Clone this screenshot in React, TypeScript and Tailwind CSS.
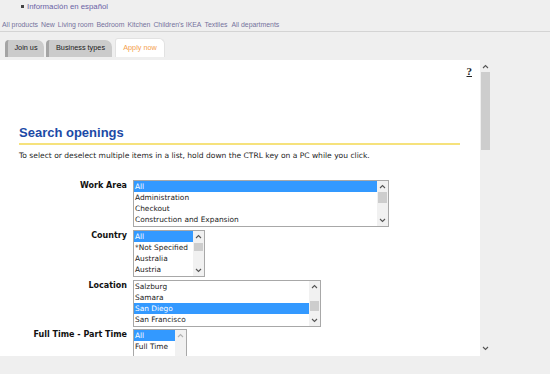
import React from "react";

const Up = () => (
  <svg width="7" height="5" viewBox="0 0 7 5" className="block">
    <path d="M1 4 L3.5 1.5 L6 4" fill="none" stroke="#555" strokeWidth="1.1" />
  </svg>
);
const Down = () => (
  <svg width="7" height="5" viewBox="0 0 7 5" className="block">
    <path d="M1 1 L3.5 3.5 L6 1" fill="none" stroke="#555" strokeWidth="1.1" />
  </svg>
);

type LBProps = {
  width: string;
  items: string[];
  selected: number;
  thumbTop: number;
  thumbH: number;
  upFaded?: boolean;
};

function ListBox({ width, items, selected, thumbTop, thumbH, upFaded }: LBProps) {
  return (
    <div className={`${width} h-[47px] border border-[#a8a8a8] bg-white flex overflow-hidden shrink-0`}>
      <div className="flex-1 flex flex-col min-w-0">
        {items.map((it, i) => (
          <div
            key={it}
            className={`h-[11.25px] leading-[11.25px] pl-[1px] text-[7.4px] whitespace-nowrap ${
              i === selected ? "bg-[#3399ff] text-white" : "text-[#222]"
            }`}
          >
            {it}
          </div>
        ))}
      </div>
      <div className="w-[11px] h-[45px] bg-[#f1f1f1] relative shrink-0">
        <div className={`absolute left-[2px] top-[3px] ${upFaded ? "opacity-40" : ""}`}>
          <Up />
        </div>
        <div
          className="absolute left-[1px] w-[9px] bg-[#cdcdcd]"
          style={{ top: thumbTop, height: thumbH }}
        />
        <div className="absolute left-[2px] bottom-[3px]">
          <Down />
        </div>
      </div>
    </div>
  );
}

function Row({ label, children, mt }: { label: string; children: React.ReactNode; mt: string }) {
  return (
    <div className={`flex shrink-0 ${mt}`}>
      <div className="w-[127px] text-right font-bold text-[8px] leading-[11px] text-[#111] whitespace-nowrap">
        {label}
      </div>
      <div className="ml-[6px]">{children}</div>
    </div>
  );
}

export default function App() {
  return (
    <div
      className="w-[550px] h-[374px] bg-[#efefef] flex flex-col overflow-hidden"
      style={{ fontFamily: '"DejaVu Sans", Verdana, sans-serif' }}
    >
      {/* top link */}
      <div className="h-[13px] pl-[21px] flex items-center gap-[3px]">
        <div className="w-[3px] h-[3px] bg-[#444]" />
        <span
          className="text-[7.8px] text-[#6a62a6]"
          style={{ fontFamily: '"Liberation Sans", Arial, sans-serif' }}
        >
          Información en español
        </span>
      </div>
      {/* nav */}
      <div
        className="mt-[6px] h-[12px] pl-[2px] flex items-center gap-[3px] text-[6.9px] text-[#75729c] whitespace-nowrap"
        style={{ fontFamily: '"Liberation Sans", Arial, sans-serif' }}
      >
        <span>All products</span>
        <span>New</span>
        <span>Living room</span>
        <span>Bedroom</span>
        <span>Kitchen</span>
        <span>Children's IKEA</span>
        <span>Textiles</span>
        <span className="ml-[1px]">All departments</span>
      </div>
      <div className="h-[1px] bg-[#d4d4d4]" />
      {/* tabs */}
      <div
        className="mt-[6px] h-[19px] flex items-end pl-[5px] gap-[2px]"
        style={{ fontFamily: '"Liberation Sans", Arial, sans-serif' }}
      >
        <div className="w-[39px] h-[17px] bg-[#cbcbcb] border-l-[3px] border-[#a4a4a4] rounded-tl-[4px] rounded-tr-[7px] text-[7.3px] text-[#1a1a1a] flex items-center justify-center">
          Join us
        </div>
        <div className="w-[66px] h-[17px] bg-[#cbcbcb] border-l-[3px] border-[#a4a4a4] rounded-tl-[4px] rounded-tr-[7px] text-[7.3px] text-[#1a1a1a] flex items-center justify-center">
          Business types
        </div>
        <div className="ml-[1px] w-[50px] h-[19px] bg-white border border-b-0 border-[#e2e2e2] rounded-tr-[6px] rounded-tl-[3px] text-[7.3px] text-[#f4a04e] flex items-center justify-center">
          Apply now
        </div>
      </div>
      {/* main */}
      <div className="mt-[3px] flex h-[296px] shrink-0">
        <div className="w-[480px] h-[296px] bg-white flex flex-col overflow-hidden">
          <div className="flex justify-end pr-[8px] pt-[5px] shrink-0">
            <span
              className="text-[11px] font-bold underline text-[#222] leading-[13px]"
              style={{ fontFamily: '"Liberation Serif", serif' }}
            >
              ?
            </span>
          </div>
          <div className="pl-[19px] mt-[47px] shrink-0">
            <div
              className="text-[13px] leading-[15px] font-bold text-[#1b4aa6]"
              style={{ fontFamily: '"Liberation Sans", Arial, sans-serif' }}
            >
              Search openings
            </div>
            <div className="mt-[3px] w-[441px] h-[1.5px] bg-[#f6e27c]" />
            <div className="mt-[6px] text-[7.55px] leading-[10px] text-[#222] whitespace-nowrap">
              To select or deselect multiple items in a list, hold down the CTRL key on a PC while you click.
            </div>
          </div>
          <Row label="Work Area" mt="mt-[19px]">
            <ListBox
              width="w-[256px]"
              items={["All", "Administration", "Checkout", "Construction and Expansion"]}
              selected={0}
              thumbTop={11}
              thumbH={11}
            />
          </Row>
          <Row label="Country" mt="mt-[3px]">
            <ListBox
              width="w-[72px]"
              items={["All", "*Not Specified", "Australia", "Austria"]}
              selected={0}
              thumbTop={12}
              thumbH={8}
            />
          </Row>
          <Row label="Location" mt="mt-[3px]">
            <ListBox
              width="w-[188px]"
              items={["Salzburg", "Samara", "San Diego", "San Francisco"]}
              selected={2}
              thumbTop={20}
              thumbH={10}
            />
          </Row>
          <Row label="Full Time - Part Time" mt="mt-[2px]">
            <ListBox
              width="w-[54px]"
              items={["All", "Full Time"]}
              selected={0}
              thumbTop={12}
              thumbH={0}
              upFaded
            />
          </Row>
        </div>
        {/* page scrollbar */}
        <div className="w-[10px] relative">
          <div className="absolute left-[2px] top-[4px]">
            <Up />
          </div>
          <div className="absolute left-[1px] top-[12px] w-[9px] h-[78px] bg-[#cdcdcd]" />
          <div className="absolute left-[2px] bottom-[5px]">
            <Down />
          </div>
        </div>
      </div>
    </div>
  );
}
